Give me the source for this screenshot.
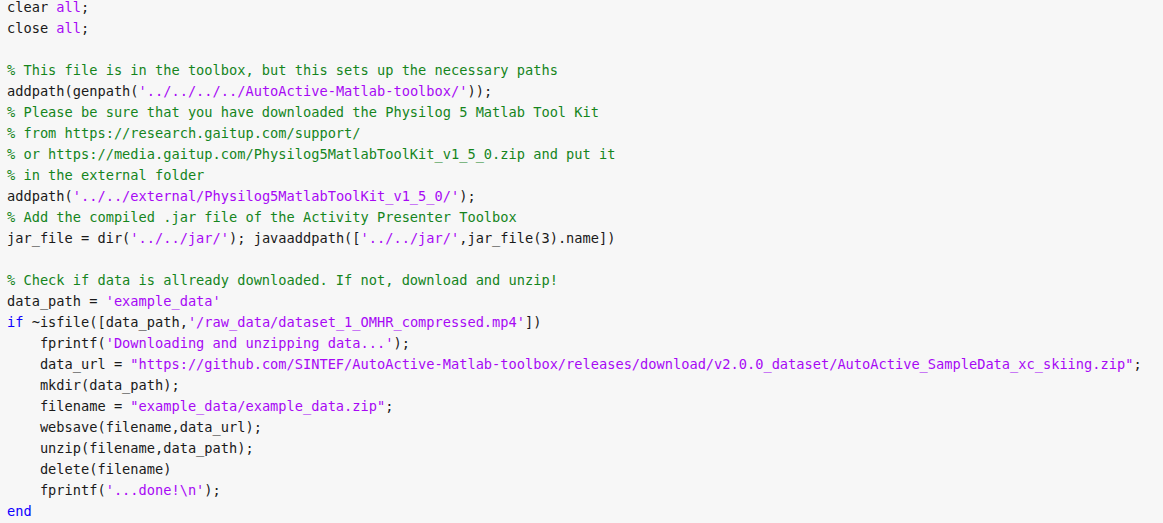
import React from "react";

type Tok = [string, "k" | "s" | "c" | "t"];

const lines: Tok[][] = [
  [["clear ", "t"], ["all", "s"], [";", "t"]],
  [["close ", "t"], ["all", "s"], [";", "t"]],
  [],
  [["% This file is in the toolbox, but this sets up the necessary paths", "c"]],
  [["addpath(genpath(", "t"], ["'../../../../AutoActive-Matlab-toolbox/'", "s"], ["));", "t"]],
  [["% Please be sure that you have downloaded the Physilog 5 Matlab Tool Kit", "c"]],
  [["% from https://research.gaitup.com/support/", "c"]],
  [["% or https://media.gaitup.com/Physilog5MatlabToolKit_v1_5_0.zip and put it", "c"]],
  [["% in the external folder", "c"]],
  [["addpath(", "t"], ["'../../external/Physilog5MatlabToolKit_v1_5_0/'", "s"], [");", "t"]],
  [["% Add the compiled .jar file of the Activity Presenter Toolbox", "c"]],
  [["jar_file = dir(", "t"], ["'../../jar/'", "s"], ["); javaaddpath([", "t"], ["'../../jar/'", "s"], [",jar_file(3).name])", "t"]],
  [],
  [["% Check if data is allready downloaded. If not, download and unzip!", "c"]],
  [["data_path = ", "t"], ["'example_data'", "s"]],
  [["if", "k"], [" ~isfile([data_path,", "t"], ["'/raw_data/dataset_1_OMHR_compressed.mp4'", "s"], ["])", "t"]],
  [["    fprintf(", "t"], ["'Downloading and unzipping data...'", "s"], [");", "t"]],
  [
    ["    data_url = ", "t"],
    ["\"https://github.com/SINTEF/AutoActive-Matlab-toolbox/releases/download/v2.0.0_dataset/AutoActive_SampleData_xc_skiing.zip\"", "s"],
    [";", "t"],
  ],
  [["    mkdir(data_path);", "t"]],
  [["    filename = ", "t"], ["\"example_data/example_data.zip\"", "s"], [";", "t"]],
  [["    websave(filename,data_url);", "t"]],
  [["    unzip(filename,data_path);", "t"]],
  [["    delete(filename)", "t"]],
  [["    fprintf(", "t"], ["'...done!\\n'", "s"], [");", "t"]],
  [["end", "k"]],
];

const color: Record<Tok[1], string> = {
  k: "text-[#0e00ff]",
  s: "text-[#a709f5]",
  c: "text-[#15851d]",
  t: "text-[#1a1a1a]",
};

export default function App() {
  return (
    <div className="w-[1163px] h-[523px] overflow-hidden bg-[#f7f7f7]">
      <pre className="-mt-[3px] pl-[7px] font-['DejaVu_Sans_Mono',monospace] text-[13.67px] leading-[21px]">
        {lines.map((line, i) => (
          <div key={i} className="h-[21px] whitespace-pre">
            {line.map(([text, kind], j) => (
              <span key={j} className={color[kind]}>
                {text}
              </span>
            ))}
          </div>
        ))}
      </pre>
    </div>
  );
}
